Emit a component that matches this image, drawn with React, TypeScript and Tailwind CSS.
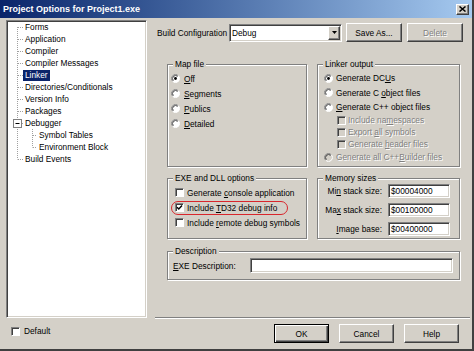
import type { ReactNode } from "react";

const face = "font-['Liberation_Sans',Arial,sans-serif]";
const raised =
  "border border-t-white border-l-white border-r-[#404040] border-b-[#404040] shadow-[inset_-1px_-1px_0_#808080]";
const sunken =
  "border border-t-[#808080] border-l-[#808080] border-r-white border-b-white shadow-[inset_1px_1px_0_#404040,inset_-1px_-1px_0_#d4d0c8]";
const etched = "border border-[#808080] shadow-[inset_1px_1px_0_#fff,1px_1px_0_#fff]";
const grayed = "text-[#808080] [text-shadow:1px_1px_0_#fff]";

// label with one underlined access key
function hot(label: string, i: number) {
  return (
    <>
      {label.slice(0, i)}
      <span className="underline underline-offset-[1px]">{label[i]}</span>
      {label.slice(i + 1)}
    </>
  );
}

function Radio({ checked, disabled }: { checked?: boolean; disabled?: boolean }) {
  return (
    <svg width="9" height="9" viewBox="0 0 9 9" className="shrink-0">
      <circle cx="4.5" cy="4.5" r="4" fill={disabled ? "#d4d0c8" : "#fff"} />
      <path d="M1.67 7.33A4 4 0 0 1 7.33 1.67" fill="none" stroke="#808080" />
      <path d="M7.33 1.67A4 4 0 0 1 1.67 7.33" fill="none" stroke="#fff" />
      <path d="M2.38 6.62A3 3 0 0 1 6.62 2.38" fill="none" stroke="#404040" />
      {checked && <circle cx="4.5" cy="4.5" r="1.4" fill="#000" />}
    </svg>
  );
}

function Check({ checked, disabled }: { checked?: boolean; disabled?: boolean }) {
  return (
    <span
      className={`w-[9px] h-[9px] shrink-0 flex items-center justify-center border border-t-[#808080] border-l-[#808080] border-r-white border-b-white shadow-[inset_1px_1px_0_#404040] ${
        disabled ? "bg-[#d4d0c8]" : "bg-white"
      }`}
    >
      {checked && (
        <svg width="7" height="7" viewBox="0 0 7 7">
          <path d="M1 3.2L2.8 5L6 1.5" stroke="#000" strokeWidth="1.4" fill="none" />
        </svg>
      )}
    </span>
  );
}

function Group({ title, className, children }: { title: string; className: string; children: ReactNode }) {
  return (
    <div className={`relative ${etched} ${className}`}>
      <span className="absolute left-[5px] top-[-6px] bg-[#d4d0c8] px-[2px] leading-[10px]">{title}</span>
      {children}
    </div>
  );
}

function Btn({ children, def, disabled, className = "" }: { children: ReactNode; def?: boolean; disabled?: boolean; className?: string }) {
  const frame = def
    ? "border border-black shadow-[inset_1px_1px_0_#fff,inset_-1px_-1px_0_#404040,inset_-2px_-2px_0_#808080]"
    : raised;
  return (
    <div className={`h-[19px] flex items-center justify-center bg-[#d4d0c8] ${frame} ${disabled ? grayed : ""} ${className}`}>
      {children}
    </div>
  );
}

type TreeItem = { label: string; level: 0 | 1; first?: boolean; last?: boolean; expander?: boolean; selected?: boolean };

const tree: TreeItem[] = [
  { label: "Forms", level: 0, first: true },
  { label: "Application", level: 0 },
  { label: "Compiler", level: 0 },
  { label: "Compiler Messages", level: 0 },
  { label: "Linker", level: 0, selected: true },
  { label: "Directories/Conditionals", level: 0 },
  { label: "Version Info", level: 0 },
  { label: "Packages", level: 0 },
  { label: "Debugger", level: 0, expander: true },
  { label: "Symbol Tables", level: 1 },
  { label: "Environment Block", level: 1, last: true },
  { label: "Build Events", level: 0, last: true },
];

function Gutter({ item }: { item: TreeItem }) {
  const dot = { stroke: "#a0a0a0", strokeDasharray: "1 1", fill: "none" };
  if (item.level === 1) {
    return (
      <svg width="29" height="12" className="shrink-0">
        <line x1="9.5" y1="0" x2="9.5" y2="12" {...dot} />
        <line x1="24.5" y1="0" x2="24.5" y2={item.last ? 6.5 : 12} {...dot} />
        <line x1="25" y1="6.5" x2="29" y2="6.5" {...dot} />
      </svg>
    );
  }
  return (
    <svg width="15" height="12" className="shrink-0">
      <line x1="9.5" y1={item.first ? 6 : 0} x2="9.5" y2={item.last ? 6.5 : 12} {...dot} />
      <line x1="10" y1="6.5" x2="15" y2="6.5" {...dot} />
      {item.expander && (
        <>
          <rect x="5.5" y="2.5" width="8" height="8" fill="#fff" stroke="#808080" />
          <line x1="7.5" y1="6.5" x2="11.5" y2="6.5" stroke="#000" />
        </>
      )}
    </svg>
  );
}

export default function App() {
  return (
    <div
      className={`w-[474px] h-[351px] overflow-hidden flex flex-col bg-[#d4d0c8] text-black text-[8.3px] leading-[10px] ${face} border-r-2 border-b-2 border-r-[#404040] border-b-[#404040]`}
    >
      {/* title bar */}
      <div className="h-[18px] shrink-0 flex items-center px-[3px] bg-linear-to-r from-[#0a246a] to-[#a6caf0]">
        <span className="flex-1 text-white font-bold text-[9px]">Project Options for Project1.exe</span>
        <div className={`w-[13px] h-[11px] bg-[#d4d0c8] ${raised} flex items-center justify-center`}>
          <svg width="7" height="6" viewBox="0 0 7 6">
            <path d="M0.5 0.5L6.5 5.5M6.5 0.5L0.5 5.5" stroke="#000" strokeWidth="1.5" />
          </svg>
        </div>
      </div>

      <div className="flex pl-[6px] pt-[2px]">
        {/* left: tree */}
        <div className="w-[141px] flex flex-col">
          <div className={`h-[298px] bg-white pl-[1px] ${sunken}`}>
            {tree.map((item) => (
              <div key={item.label} className="h-[12px] flex items-center">
                <Gutter item={item} />
                <span
                  className={`px-[2px] leading-[11px] whitespace-nowrap ${
                    item.selected ? "bg-[#0a246a] text-white" : ""
                  }`}
                >
                  {item.label}
                </span>
              </div>
            ))}
          </div>
          <div className="h-[26px] flex items-center pl-[5px] gap-[4px]">
            <Check />
            <span>Default</span>
          </div>
        </div>

        {/* right: pages */}
        <div className="ml-[10px] w-[313px] flex flex-col">
          <div className="mt-[3px] h-[19px] flex items-center">
            <span className="w-[72px] whitespace-nowrap">Build Configuration</span>
            <div className={`w-[113px] h-[18px] bg-white ${sunken} flex items-center`}>
              <span className="flex-1 pl-[2px]">Debug</span>
              <div className={`w-[12px] h-[14px] mr-[1px] bg-[#d4d0c8] ${raised} flex items-center justify-center`}>
                <svg width="5" height="3" viewBox="0 0 5 3">
                  <path d="M0 0H5L2.5 3Z" fill="#000" />
                </svg>
              </div>
            </div>
            <Btn className="w-[56px] ml-[4px]">Save As...</Btn>
            <Btn disabled className="w-[56px] ml-[5px]">Delete</Btn>
          </div>

          <div className="mt-[22px] pl-[10px] flex gap-[10px]">
            <Group title="Map file" className="w-[140px] h-[103px] pt-[6px] pl-[3px]">
              {[
                ["Off", 0, true],
                ["Segments", 0, false],
                ["Publics", 0, false],
                ["Detailed", 0, false],
              ].map(([label, k, on]) => (
                <div key={label as string} className="h-[15px] flex items-center gap-[4px]">
                  <Radio checked={on as boolean} />
                  <span>{hot(label as string, k as number)}</span>
                </div>
              ))}
            </Group>

            <Group title="Linker output" className="w-[143px] h-[103px] pt-[6px] pl-[6px]">
              <div className="h-[14px] flex items-center gap-[3px]">
                <Radio checked />
                <span>{hot("Generate DCUs", 11)}</span>
              </div>
              <div className="h-[15px] flex items-center gap-[3px]">
                <Radio />
                <span>{hot("Generate C object files", 11)}</span>
              </div>
              <div className="h-[14px] flex items-center gap-[3px]">
                <Radio />
                <span>{hot("Generate C++ object files", 0)}</span>
              </div>
              {[
                ["Include namespaces", 10],
                ["Export all symbols", 7],
                ["Generate header files", 9],
              ].map(([label, k]) => (
                <div key={label as string} className="h-[12px] flex items-center gap-[2px] pl-[13px]">
                  <Check disabled />
                  <span className={grayed}>{hot(label as string, k as number)}</span>
                </div>
              ))}
              <div className="h-[14px] flex items-center gap-[3px]">
                <Radio disabled />
                <span className={grayed}>{hot("Generate all C++Builder files", 16)}</span>
              </div>
            </Group>
          </div>

          <div className="mt-[11px] pl-[10px] flex gap-[10px]">
            <Group title="EXE and DLL options" className="w-[140px] h-[61px] pt-[6px] pl-[7px]">
              <div className="h-[15px] flex items-center gap-[3px]">
                <Check />
                <span>{hot("Generate console application", 9)}</span>
              </div>
              <div className="relative h-[15px] flex items-center gap-[3px]">
                <Check checked />
                <span>{hot("Include TD32 debug info", 8)}</span>
                <span className="absolute left-[-4px] top-[1px] w-[117px] h-[14px] rounded-[7px] border-[1.5px] border-[#d8262c]" />
              </div>
              <div className="h-[15px] flex items-center gap-[3px]">
                <Check />
                <span>{hot("Include remote debug symbols", 8)}</span>
              </div>
            </Group>

            <Group title="Memory sizes" className="w-[143px] h-[61px] pt-[2px]">
              {[
                ["Min stack size:", 2, "$00004000"],
                ["Max stack size:", 2, "$00100000"],
                ["Image base:", 0, "$00400000"],
              ].map(([label, k, val]) => (
                <div key={label as string} className="h-[19px] flex items-center">
                  <span className="w-[64px] text-right whitespace-nowrap">{hot(label as string, k as number)}</span>
                  <div className={`ml-[6px] w-[62px] h-[14px] bg-white ${sunken} flex items-center pl-[2px]`}>{val}</div>
                </div>
              ))}
            </Group>
          </div>

          <div className="mt-[12px] pl-[10px]">
            <Group title="Description" className="w-[293px] h-[29px] pt-[6px] pl-[5px]">
              <div className="flex items-center">
                <span className="w-[77px]">{hot("EXE Description:", 0)}</span>
                <div className={`w-[203px] h-[15px] bg-white ${sunken}`} />
              </div>
            </Group>
          </div>

          <div className="mt-[37px] ml-[-2px] h-[2px] border-t border-t-[#808080] border-b border-b-white" />

          <div className="mt-[5px] pr-[11px] flex justify-end gap-[10px]">
            <Btn def className="w-[55px]">OK</Btn>
            <Btn className="w-[55px]">Cancel</Btn>
            <Btn className="w-[55px]">Help</Btn>
          </div>
        </div>
      </div>
    </div>
  );
}
